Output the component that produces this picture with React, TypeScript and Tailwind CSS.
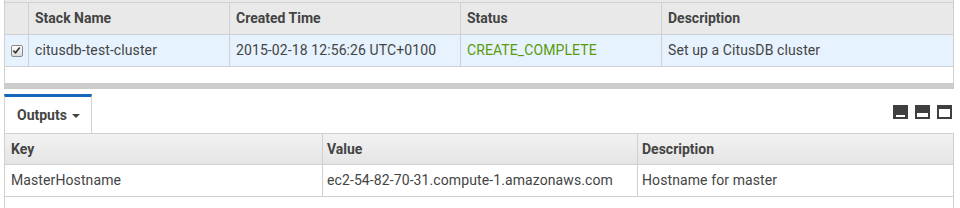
import React from "react";

type Col = { label: string; width: string };

const stackCols: Col[] = [
  { label: "Stack Name", width: "w-[201px]" },
  { label: "Created Time", width: "w-[231px]" },
  { label: "Status", width: "w-[201px]" },
  { label: "Description", width: "flex-1" },
];

const outputCols: Col[] = [
  { label: "Key", width: "w-[318px]" },
  { label: "Value", width: "w-[315px]" },
  { label: "Description", width: "flex-1" },
];

function Checkbox() {
  return (
    <span className="flex h-[12px] w-[12px] items-center justify-center rounded-[2px] border border-[#8a8a8a] bg-gradient-to-b from-[#fdfdfd] to-[#dcdcdc]">
      <svg viewBox="0 0 10 10" className="h-[9px] w-[9px]">
        <path d="M1.5 5.2 L4 7.6 L8.6 1.8" fill="none" stroke="#333" strokeWidth="1.8" />
      </svg>
    </span>
  );
}

function PanelIcon({ bar }: { bar: "thin" | "mid" | "full" }) {
  return (
    <svg viewBox="0 0 15 14" className="h-[14px] w-[15px]">
      <rect x="0" y="0" width="15" height="14" fill="#3f3f3f" />
      {bar === "thin" && <rect x="3" y="10" width="9" height="2" fill="#fff" />}
      {bar === "mid" && <rect x="2" y="8" width="11" height="4" fill="#fff" />}
      {bar === "full" && <rect x="2" y="4" width="11" height="8" fill="#fff" />}
    </svg>
  );
}

export default function App() {
  return (
    <div className="h-[208px] w-[960px] overflow-hidden bg-white font-['Roboto',sans-serif] text-[14px] tracking-[0.1px] text-[#444]">
      {/* stacks table */}
      <div className="ml-[4px] w-[950px] border-x border-[#d0d0d0]">
        <div className="h-[3px] border-b border-[#d0d0d0] bg-[#e9e9e9]" />
        <div className="flex h-[32px] border-b border-[#d0d0d0] bg-[#e9e9e9] font-bold tracking-normal">
          <div className="w-[24px] border-r border-[#d0d0d0]" />
          {stackCols.map((c, i) => (
            <div
              key={c.label}
              className={`${c.width} flex items-center px-[6px] ${i < stackCols.length - 1 ? "border-r border-[#d0d0d0]" : ""}`}
            >
              {c.label}
            </div>
          ))}
        </div>
        <div className="flex h-[32px] border-b border-[#d0d0d0] bg-[#e6f2fd]">
          <div className="flex w-[24px] items-center justify-center border-r border-[#d0d0d0]">
            <Checkbox />
          </div>
          <div className="flex w-[201px] items-center border-r border-[#d0d0d0] px-[6px]">citusdb-test-cluster</div>
          <div className="flex w-[231px] items-center border-r border-[#d0d0d0] px-[6px]">2015-02-18 12:56:26 UTC+0100</div>
          <div className="flex w-[201px] items-center border-r border-[#d0d0d0] px-[6px] text-[#5b9a0c]">CREATE_COMPLETE</div>
          <div className="flex flex-1 items-center px-[6px]">Set up a CitusDB cluster</div>
        </div>
        <div className="h-[16px]" />
      </div>
      <div className="ml-[4px] h-[6px] w-[950px] bg-[#cccccc]" />

      {/* outputs panel */}
      <div className="ml-[4px] mt-[5px] w-[950px]">
        <div className="flex items-end justify-between">
          <div className="flex h-[39px] w-[88px] items-center gap-[5px] border-x border-t-[3px] border-[#d0d0d0] border-t-[#1466b8] pl-[12px] font-bold tracking-normal">
            Outputs
            <svg viewBox="0 0 8 4" className="mt-[1px] h-[4px] w-[8px]">
              <path d="M0 0 H8 L4 4 Z" fill="#444" />
            </svg>
          </div>
          <div className="mb-[14px] mr-[2px] flex gap-[7px]">
            <PanelIcon bar="thin" />
            <PanelIcon bar="mid" />
            <PanelIcon bar="full" />
          </div>
        </div>
        <div className="border-x border-[#d0d0d0]">
          <div className="flex h-[32px] border-y border-[#d0d0d0] bg-gradient-to-b from-[#f2f2f2] to-[#e5e5e5] font-bold tracking-normal">
            {outputCols.map((c, i) => (
              <div
                key={c.label}
                className={`${c.width} flex items-center ${i === 0 ? "px-[6px]" : "px-[4px]"} ${i < outputCols.length - 1 ? "border-r border-[#d0d0d0]" : ""}`}
              >
                {c.label}
              </div>
            ))}
          </div>
          <div className="flex h-[32px] border-b border-[#d0d0d0]">
            <div className="flex w-[318px] items-center border-r border-[#d0d0d0] px-[6px]">MasterHostname</div>
            <div className="flex w-[315px] items-center border-r border-[#d0d0d0] px-[4px]">ec2-54-82-70-31.compute-1.amazonaws.com</div>
            <div className="flex flex-1 items-center px-[4px]">Hostname for master</div>
          </div>
          <div className="h-[20px]" />
        </div>
      </div>
    </div>
  );
}
